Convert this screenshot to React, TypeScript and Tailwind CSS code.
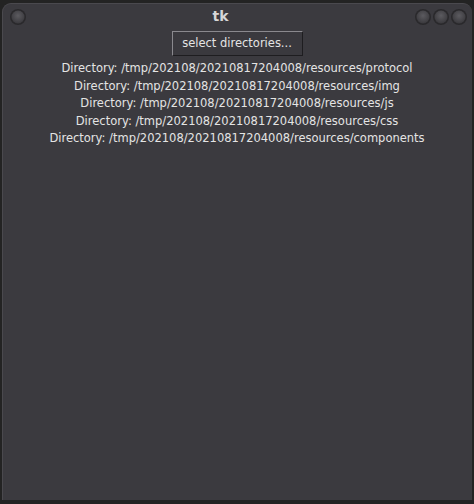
import React from "react";

const dirs = [
  "protocol",
  "img",
  "js",
  "css",
  "components",
];

function Knob() {
  return (
    <svg width="18" height="18" viewBox="0 0 18 18">
      <defs>
        <radialGradient id="kg" cx="50%" cy="40%" r="60%">
          <stop offset="0%" stopColor="#5c5b60" />
          <stop offset="100%" stopColor="#3a393d" />
        </radialGradient>
      </defs>
      <circle cx="9" cy="9" r="8" fill="#2a292c" />
      <circle cx="9" cy="9" r="6.5" fill="url(#kg)" />
    </svg>
  );
}

export default function App() {
  return (
    <div className="w-[474px] h-[504px] bg-[#232323] pt-[3px] pl-[2px] font-['DejaVu_Sans',sans-serif]">
      <div className="w-[470px] h-[497px] rounded-t-[9px] bg-[#3b3a3f] border-l border-t border-[#4a494e] flex flex-col">
        {/* titlebar */}
        <div className="h-[25px] flex items-center pl-[6px] pr-[4px]">
          <Knob />
          <div className="flex-1 text-center text-[14px] font-bold text-[#d6d6d6]">tk</div>
          <div className="flex">
            <Knob />
            <Knob />
            <Knob />
          </div>
        </div>
        {/* content */}
        <div className="flex flex-col items-center">
          <button className="mt-[2px] h-[25px] w-[131px] -ml-[1px] bg-[#3a393e] border border-t-[#8a898e] border-l-[#8a898e] border-r-[#1e1d20] border-b-[#1e1d20] text-[11.5px] text-[#e4e4e4]">
            select directories...
          </button>
          <div className="mt-[4px] flex flex-col items-center text-[11.5px] leading-[17.5px] text-[#e4e4e4] -ml-[1px]">
            {dirs.map((d) => (
              <div key={d}>Directory: /tmp/202108/20210817204008/resources/{d}</div>
            ))}
          </div>
        </div>
      </div>
    </div>
  );
}
